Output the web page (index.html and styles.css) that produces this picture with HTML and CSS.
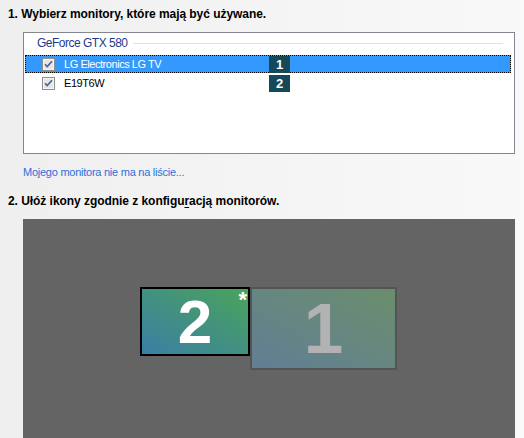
FILE: index.html
```html
<!DOCTYPE html>
<html lang="pl">
<head>
	<meta charset="UTF-8">
	<title>Ustawienia ekranu</title>
	<link rel="stylesheet" href="styles.css">
</head>
<body>
	<div class="page">
		<h1 class="step">1. Wybierz monitory, które mają być używane.</h1>

		<div class="listbox">
			<div class="group-head">
				<span class="group-name">GeForce GTX 580</span>
				<span class="group-line"></span>
			</div>

			<div class="row row--selected">
				<span class="check">
					<svg width="13" height="13" viewBox="0 0 13 13">
						<rect x="0.5" y="0.5" width="12" height="12" fill="#f4f4f4" stroke="#8e8f8f"/>
						<rect x="2" y="2" width="9" height="9" fill="#e6e6e6"/>
						<path d="M3 6.2 L5.2 8.6 L10 3.2" fill="none" stroke="#4a5f9a" stroke-width="1.6"/>
					</svg>
				</span>
				<span class="name">LG Electronics LG TV</span>
				<span class="badge">1</span>
			</div>

			<div class="row">
				<span class="check">
					<svg width="13" height="13" viewBox="0 0 13 13">
						<rect x="0.5" y="0.5" width="12" height="12" fill="#f4f4f4" stroke="#8e8f8f"/>
						<rect x="2" y="2" width="9" height="9" fill="#e6e6e6"/>
						<path d="M3 6.2 L5.2 8.6 L10 3.2" fill="none" stroke="#4a5f9a" stroke-width="1.6"/>
					</svg>
				</span>
				<span class="name">E19T6W</span>
				<span class="badge">2</span>
			</div>
		</div>

		<a class="missing" href="#">Mojego monitora nie ma na liście...</a>

		<h1 class="step step--second">2. Ułóż ikony zgodnie z konfigu<u>r</u>acją monitorów.</h1>

		<div class="arrange">
			<div class="monitor monitor--one">1</div>
			<div class="monitor monitor--two">2<span class="primary">*</span></div>
		</div>
	</div>
</body>
</html>
```

FILE: styles.css
```css
html,
body {
	height: 100%;
}

body {
	margin: 0;
	font-family: 'Liberation Sans', Arial, sans-serif;
	font-size: 11px;
	color: #000;
	background: linear-gradient(to right, #efefef, #f9f9f9);
	overflow: hidden;
}

.page {
	padding: 6px 9px 0 8px;
}

.step {
	margin: 0;
	font-size: 12px;
	font-weight: bold;
	line-height: 16px;
	letter-spacing: -0.05px;
}

.step--second {
	margin-top: 13px;
}

.step u {
	text-decoration-thickness: 1px;
	text-underline-offset: 2px;
}

.listbox {
	margin: 10px 0 0 15px;
	height: 120px;
	border: 1px solid #828790;
	background: #fff;
}

.group-head {
	display: flex;
	align-items: center;
	height: 20px;
	padding: 0 11px 0 13px;
}

.group-name {
	color: #1e3a8c;
	font-size: 12px;
	letter-spacing: -0.5px;
}

.group-line {
	flex: 1;
	height: 1px;
	margin-left: 5px;
	background: #dde2e7;
}

.row {
	display: flex;
	align-items: center;
	width: 468px;
	height: 16px;
	margin: 1px 0 0 1px;
	border: 1px solid transparent;
	padding-left: 16px;
	letter-spacing: -0.45px;
}

.row--selected {
	margin-top: 2px;
	color: #fff;
	border: 1px dotted #000;
	background: linear-gradient(#3399ff, #3399ff) padding-box, linear-gradient(#d9822b, #d9822b) border-box;
}

.check {
	display: flex;
	width: 13px;
	height: 13px;
	margin-right: 9px;
}

.name {
	width: 205px;
}

.badge {
	display: flex;
	align-items: center;
	justify-content: center;
	width: 21px;
	height: 17px;
	margin: -1px 0;
	background: #154858;
	color: #fff;
	font-weight: bold;
	font-size: 13px;
	letter-spacing: 0;
}

.missing {
	display: block;
	margin: 10px 0 0 15px;
	line-height: 16px;
	color: #2f6fd8;
	text-decoration: none;
	letter-spacing: -0.25px;
}

.arrange {
	position: relative;
	height: 240px;
	margin: 10px 0 0 15px;
	background: #646464;
}

.monitor {
	position: absolute;
	top: 68px;
	display: flex;
	align-items: center;
	justify-content: center;
	box-sizing: border-box;
	font-weight: bold;
}

.monitor--one {
	left: 227px;
	width: 147px;
	height: 83px;
	border: 2px solid #545454;
	background: linear-gradient(to top right, #627e95, #6a8e6c);
	color: #b2b2b2;
	font-size: 71px;
}

.monitor--two {
	left: 117px;
	width: 110px;
	height: 69px;
	border: 2px solid #000;
	background: linear-gradient(to top right, #3a7fa6, #4aa35a);
	color: #fff;
	font-size: 62px;
}

.primary {
	position: absolute;
	top: 1px;
	right: 1px;
	font-size: 22px;
	line-height: 20px;
}
```
